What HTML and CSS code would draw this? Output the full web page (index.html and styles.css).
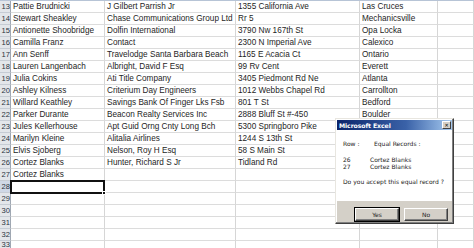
FILE: index.html
```html
<!DOCTYPE html>
<html>
<head>
<meta charset="utf-8">
<link rel="stylesheet" href="styles.css">
</head>
<body>
<div class="screen">
  <div class="topstrip"></div>
  <div class="sheet">
    <div class="rh">13</div><div class="c">Pattie Brudnicki</div><div class="c">J Gilbert Parrish Jr</div><div class="c">1355 California Ave</div><div class="c">Las Cruces</div><div class="c"></div>
    <div class="rh">14</div><div class="c">Stewart Sheakley</div><div class="c">Chase Communications Group Ltd</div><div class="c">Rr 5</div><div class="c">Mechanicsville</div><div class="c"></div>
    <div class="rh">15</div><div class="c">Antionette Shoobridge</div><div class="c">Dolfin International</div><div class="c">3790 Nw 167th St</div><div class="c">Opa Locka</div><div class="c"></div>
    <div class="rh">16</div><div class="c">Camilla Franz</div><div class="c">Contact</div><div class="c">2300 N Imperial Ave</div><div class="c">Calexico</div><div class="c"></div>
    <div class="rh">17</div><div class="c">Ann Senff</div><div class="c">Travelodge Santa Barbara Beach</div><div class="c">1165 E Acacia Ct</div><div class="c">Ontario</div><div class="c"></div>
    <div class="rh">18</div><div class="c">Lauren Langenbach</div><div class="c">Albright, David F Esq</div><div class="c">99 Rv Cent</div><div class="c">Everett</div><div class="c"></div>
    <div class="rh">19</div><div class="c">Julia Cokins</div><div class="c">Ati Title Company</div><div class="c">3405 Piedmont Rd Ne</div><div class="c">Atlanta</div><div class="c"></div>
    <div class="rh">20</div><div class="c">Ashley Kilness</div><div class="c">Criterium Day Engineers</div><div class="c">1012 Webbs Chapel Rd</div><div class="c">Carrollton</div><div class="c"></div>
    <div class="rh">21</div><div class="c">Willard Keathley</div><div class="c">Savings Bank Of Finger Lks Fsb</div><div class="c">801 T St</div><div class="c">Bedford</div><div class="c"></div>
    <div class="rh">22</div><div class="c">Parker Durante</div><div class="c">Beacon Realty Services Inc</div><div class="c">2888 Bluff St #-450</div><div class="c">Boulder</div><div class="c"></div>
    <div class="rh">23</div><div class="c">Jules Kellerhouse</div><div class="c">Apt Guid Orng Cnty Long Bch</div><div class="c">5300 Springboro Pike</div><div class="c"></div><div class="c"></div>
    <div class="rh">24</div><div class="c">Marilyn Kleine</div><div class="c">Alitalia Airlines</div><div class="c">1244 S 13th St</div><div class="c"></div><div class="c"></div>
    <div class="rh">25</div><div class="c">Elvis Sjoberg</div><div class="c">Nelson, Roy H Esq</div><div class="c">58 S Main St</div><div class="c"></div><div class="c"></div>
    <div class="rh">26</div><div class="c">Cortez Blanks</div><div class="c">Hunter, Richard S Jr</div><div class="c">Tidland Rd</div><div class="c"></div><div class="c"></div>
    <div class="rh">27</div><div class="c">Cortez Blanks</div><div class="c"></div><div class="c"></div><div class="c"></div><div class="c"></div>
    <div class="rh sel">28</div><div class="c active"><span class="handle"></span></div><div class="c"></div><div class="c"></div><div class="c"></div><div class="c"></div>
    <div class="rh">29</div><div class="c"></div><div class="c"></div><div class="c"></div><div class="c"></div><div class="c"></div>
    <div class="rh">30</div><div class="c"></div><div class="c"></div><div class="c"></div><div class="c"></div><div class="c"></div>
    <div class="rh">31</div><div class="c"></div><div class="c"></div><div class="c"></div><div class="c"></div><div class="c"></div>
    <div class="rh">32</div><div class="c"></div><div class="c"></div><div class="c"></div><div class="c"></div><div class="c"></div>
    <div class="rh last">33</div><div class="c"></div><div class="c"></div><div class="c"></div><div class="c"></div><div class="c"></div>
  </div>

  <div class="dialog">
    <div class="titlebar">
      <span class="title">Microsoft Excel</span>
      <span class="close">&#x2715;</span>
    </div>
    <div class="dbody">
      <div class="drow head"><span class="k">Row :</span><span>Equal Records :</span></div>
      <div class="list">
        <div class="drow"><span class="k">26</span><span>Cortez Blanks</span></div>
        <div class="drow"><span class="k">27</span><span>Cortez Blanks</span></div>
      </div>
      <div class="question">Do you accept this equal record ?</div>
    </div>
    <div class="dfoot">
      <button class="btn def">Yes</button>
      <button class="btn">No</button>
    </div>
  </div>
</div>
</body>
</html>
```

FILE: styles.css
```css
* { box-sizing: border-box; }
html, body { margin: 0; padding: 0; background: #fff; }
body { width: 474px; height: 248px; overflow: hidden; }

.screen {
  position: relative;
  width: 474px;
  height: 248px;
  overflow: hidden;
  font-family: "Liberation Sans", Arial, sans-serif;
}

.topstrip {
  height: 1px;
  background: #b7c4d6;
}

.sheet {
  display: grid;
  grid-template-columns: 11px 94px 131px 124px 78px 36px;
  grid-auto-rows: 12px;
}

.rh {
  background: #e3e6ea;
  border-right: 1px solid #9fa7b2;
  border-bottom: 1px solid #c6ccd4;
  font-size: 7.6px;
  line-height: 11px;
  color: #2b3440;
  text-align: right;
  overflow: hidden;
  white-space: nowrap;
}
.rh.sel { background: #cfd8e6; }
.rh.last { line-height: 7px; }

.c {
  position: relative;
  border-right: 1px solid #d6d6d6;
  border-bottom: 1px solid #dcdcdc;
  font-size: 8.2px;
  line-height: 12px;
  color: #1e1e1e;
  padding-left: 2px;
  white-space: nowrap;
}

.c.active {
  border: 2px solid #111;
  margin: -1px 0 -1px -1px;
  z-index: 2;
}
.handle {
  position: absolute;
  right: -3px;
  bottom: -3px;
  width: 4px;
  height: 4px;
  background: #111;
  border: 1px solid #fff;
}

/* Dialog */
.dialog {
  position: absolute;
  left: 335px;
  top: 118px;
  width: 119px;
  height: 106px;
  background: #d4d0c8;
  border: 1px solid;
  border-color: #e8e6e0 #404040 #404040 #e8e6e0;
  box-shadow: inset -1px -1px 0 #808080, inset 1px 1px 0 #fff;
  padding: 1px;
  display: flex;
  flex-direction: column;
  font-family: "DejaVu Sans", Tahoma, sans-serif;
  z-index: 5;
}

.titlebar {
  height: 10px;
  background: linear-gradient(to right, #0a246a 0%, #3a62a8 60%, #a6caf0 100%);
  display: flex;
  align-items: center;
  justify-content: space-between;
  padding: 0 1px 0 2px;
}
.title {
  color: #fff;
  font-weight: bold;
  font-size: 6.2px;
  letter-spacing: -0.1px;
}
.close {
  width: 9px;
  height: 8px;
  background: #d4d0c8;
  border: 1px solid;
  border-color: #fff #404040 #404040 #fff;
  font-size: 5px;
  line-height: 6px;
  text-align: center;
  color: #000;
}

.dbody {
  background: #fff;
  flex: 0 0 71px;
  padding: 10px 0 0 6px;
  font-size: 6px;
  color: #222;
  display: flex;
  flex-direction: column;
}
.drow { display: flex; line-height: 7px; }
.drow .k { width: 27px; }
.drow.head .k { width: 31px; }
.list { margin-top: 9px; }
.question { margin-top: 8px; line-height: 7px; }

.dfoot {
  flex: 1;
  display: flex;
  justify-content: flex-end;
  align-items: flex-start;
  gap: 5px;
  padding: 7px 4px 0 0;
}
.btn {
  width: 44px;
  height: 13px;
  padding: 0;
  font-family: "DejaVu Sans", Tahoma, sans-serif;
  font-size: 6px;
  color: #222;
  background: #d4d0c8;
  border: 1px solid;
  border-color: #fff #404040 #404040 #fff;
  box-shadow: inset -1px -1px 0 #808080;
}
.btn.def {
  outline: 1px solid #000;
  outline-offset: 0;
}
```
